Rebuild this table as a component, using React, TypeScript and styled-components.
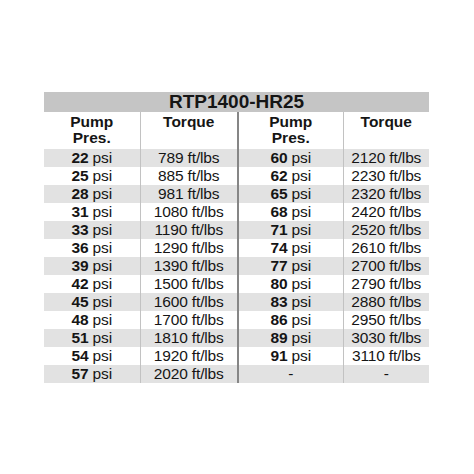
import styled, { createGlobalStyle } from 'styled-components';

const GlobalStyle = createGlobalStyle`
  body {
    margin: 0;
    background: #ffffff;
    font-family: 'Liberation Sans', Arial, sans-serif;
    color: #151515;
  }
`;

const Page = styled.div`
  padding: 92px 0 0 44px;
`;

const Table = styled.table`
  width: 385px;
  table-layout: fixed;
  border-collapse: collapse;
  border-spacing: 0;
`;

const TitleCell = styled.th`
  height: 20px;
  padding: 0;
  background: #c5c5c5;
  font-size: 19px;
  font-weight: 700;
  line-height: 20px;
  text-align: center;
`;

const HeadCell = styled.th<{ $divider?: 'light' | 'heavy' }>`
  height: 37px;
  padding: 2px 0 0;
  vertical-align: top;
  font-size: 15.5px;
  font-weight: 700;
  line-height: 16px;
  text-align: center;
  box-sizing: border-box;
  border-left: ${(p) =>
    p.$divider === 'heavy' ? '2px solid #868686' : p.$divider === 'light' ? '1px solid #c2c2c2' : 'none'};
`;

const Row = styled.tr<{ $striped: boolean }>`
  height: 18px;
  background: ${(p) => (p.$striped ? '#e2e2e2' : '#ffffff')};
`;

const Cell = styled.td<{ $divider?: 'light' | 'heavy' }>`
  padding: 0;
  font-size: 15.5px;
  letter-spacing: -0.15px;
  line-height: 18px;
  text-align: center;
  white-space: nowrap;
  border-left: ${(p) =>
    p.$divider === 'heavy' ? '2px solid #868686' : p.$divider === 'light' ? '1px solid #c2c2c2' : 'none'};
`;

const Num = styled.b`
  font-weight: 700;
`;

const left: [string, string][] = [
  ['22', '789'], ['25', '885'], ['28', '981'], ['31', '1080'], ['33', '1190'],
  ['36', '1290'], ['39', '1390'], ['42', '1500'], ['45', '1600'], ['48', '1700'],
  ['51', '1810'], ['54', '1920'], ['57', '2020'],
];

const right: ([string, string] | null)[] = [
  ['60', '2120'], ['62', '2230'], ['65', '2320'], ['68', '2420'], ['71', '2520'],
  ['74', '2610'], ['77', '2700'], ['80', '2790'], ['83', '2880'], ['86', '2950'],
  ['89', '3030'], ['91', '3110'], null,
];

export default function App() {
  return (
    <Page>
      <GlobalStyle />
      <Table>
        <colgroup>
          <col style={{ width: 96 }} />
          <col style={{ width: 98 }} />
          <col style={{ width: 105 }} />
          <col style={{ width: 86 }} />
        </colgroup>
        <thead>
          <tr>
            <TitleCell colSpan={4}>RTP1400-HR25</TitleCell>
          </tr>
          <tr>
            <HeadCell>Pump<br />Pres.</HeadCell>
            <HeadCell $divider="light">Torque</HeadCell>
            <HeadCell $divider="heavy">Pump<br />Pres.</HeadCell>
            <HeadCell $divider="light">Torque</HeadCell>
          </tr>
        </thead>
        <tbody>
          {left.map(([psi, torque], i) => {
            const r = right[i];
            return (
              <Row key={psi} $striped={i % 2 === 0}>
                <Cell><Num>{psi}</Num> psi</Cell>
                <Cell $divider="light">{torque} ft/lbs</Cell>
                <Cell $divider="heavy">{r ? <><Num>{r[0]}</Num> psi</> : '-'}</Cell>
                <Cell $divider="light">{r ? `${r[1]} ft/lbs` : '-'}</Cell>
              </Row>
            );
          })}
        </tbody>
      </Table>
    </Page>
  );
}
